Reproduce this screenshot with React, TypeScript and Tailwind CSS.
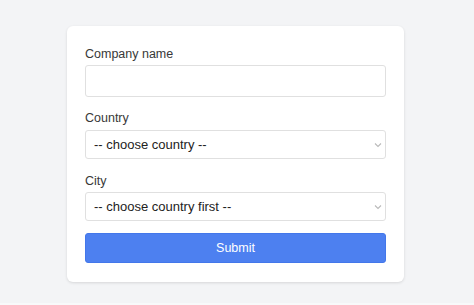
import React from "react";

function Chevron() {
  return (
    <svg
      className="pointer-events-none absolute right-[4px] top-1/2 -translate-y-1/2"
      width="8"
      height="6"
      viewBox="0 0 8 6"
      fill="none"
    >
      <path d="M1 1.5 L4 4.5 L7 1.5" stroke="#b9b9b9" strokeWidth="1.1" />
    </svg>
  );
}

function SelectField({ value }: { value: string }) {
  return (
    <div className="relative">
      <select
        defaultValue={value}
        className="block h-[29px] w-full appearance-none rounded-[3px] border border-[#e0e0e0] bg-white pl-[8px] pr-[20px] text-[13px] text-[#222] outline-none"
        style={{ fontFamily: '"Liberation Sans", Arial, sans-serif' }}
      >
        <option>{value}</option>
      </select>
      <Chevron />
    </div>
  );
}

export default function App() {
  const font = { fontFamily: '"Liberation Sans", Arial, sans-serif' };
  return (
    <div className="w-[474px]" style={font}>
      <div className="h-[303px] bg-[#f3f4f6] pt-[26px]">
        <div className="ml-[67px] w-[337px] rounded-[6px] bg-white px-[18px] pt-[19px] pb-[19px] shadow-[0_1px_3px_rgba(0,0,0,0.12)]">
          <label className="block h-[18px] text-[12.5px] leading-[18px] text-[#383838]">
            Company name
          </label>
          <input
            type="text"
            className="mt-[2px] block h-[32px] w-full rounded-[3px] border border-[#e0e0e0] bg-white outline-none"
          />
          <label className="mt-[12px] block h-[18px] text-[12.5px] leading-[18px] text-[#383838]">
            Country
          </label>
          <div className="mt-[3px]">
            <SelectField value="-- choose country --" />
          </div>
          <label className="mt-[13px] block h-[18px] text-[12.5px] leading-[18px] text-[#383838]">
            City
          </label>
          <div className="mt-[2px]">
            <SelectField value="-- choose country first --" />
          </div>
          <button
            type="button"
            className="mt-[12px] block h-[30px] w-full rounded-[3px] border border-[#4377ea] bg-[#4d80f0] pt-[1px] text-[12.5px] text-white"
            style={font}
          >
            Submit
          </button>
        </div>
      </div>
      <div className="h-[2px] bg-[#f8f9fa]" />
    </div>
  );
}
